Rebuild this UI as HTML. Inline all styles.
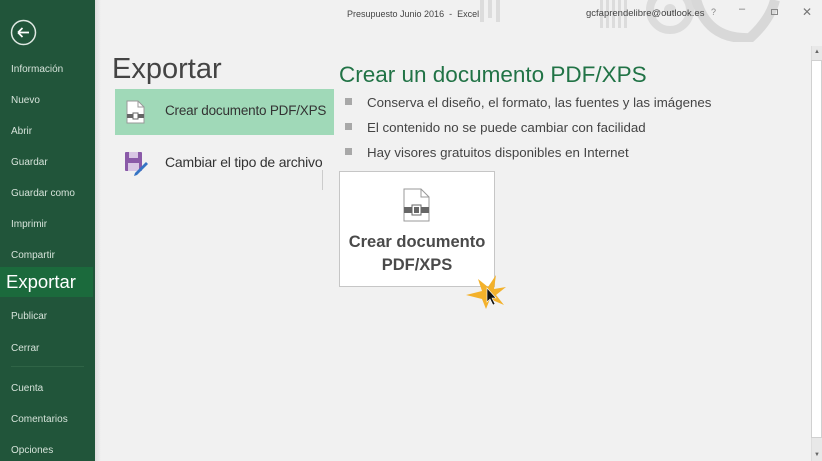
<!DOCTYPE html>
<html><head><meta charset="utf-8"><style>
*{margin:0;padding:0;box-sizing:border-box}
body{width:822px;height:461px;overflow:hidden;background:#f1f1f1;font-family:"Liberation Sans",sans-serif;position:relative}
.sb{position:absolute;left:0;top:0;width:95px;height:461px;background:#21553a}
.sb div{position:absolute;left:11px;color:#d6e3da;font-size:10px}
.sel{position:absolute;left:0;top:267px;width:93px;height:30px;background:#1b6a3c}
.sel span{position:absolute;left:6px;top:4px;color:#fff;font-size:18.5px}
.t{position:absolute;color:#444;white-space:nowrap}
.sq{position:absolute;left:345px;width:7px;height:7px;background:#a8a8a8}
</style></head><body>
<div style="position:absolute;left:95px;top:0;width:6px;height:461px;background:linear-gradient(90deg,#ddd,#f1f1f1)"></div>
<svg style="position:absolute;left:470px;top:0" width="320" height="42">
<g fill="#dcdcdc"><rect x="10" y="0" width="4" height="22"/><rect x="18" y="0" width="4" height="18"/><rect x="26" y="0" width="4" height="22"/>
<rect x="130" y="0" width="3" height="28"/><rect x="136" y="0" width="3" height="28"/><rect x="142" y="0" width="3" height="28"/><rect x="148" y="0" width="3" height="28"/><rect x="154" y="0" width="3" height="28"/></g>
<circle cx="200" cy="10" r="20" fill="none" stroke="#dcdcdc" stroke-width="8"/>
<circle cx="200" cy="10" r="6" fill="#dcdcdc"/>
<path d="M225 -5 Q235 40 280 38 Q300 20 305 0" fill="none" stroke="#d8d8d8" stroke-width="10"/>
</svg>
<div class="t" style="left:347px;top:9px;font-size:9px;color:#444">Presupuesto Junio 2016 &nbsp;-&nbsp; Excel</div>
<div class="t" style="left:586px;top:8px;font-size:9.5px;color:#444">gcfaprendelibre@outlook.es</div>
<div class="t" style="left:711px;top:7px;font-size:9px;color:#888">?</div>
<div class="t" style="left:739px;top:3px;font-size:11px;color:#777">–</div>
<div style="position:absolute;left:771px;top:9px;width:7px;height:6px;border:1px solid #888"></div>
<div class="t" style="left:802px;top:5px;font-size:12px;color:#777">✕</div>
<div style="position:absolute;left:811px;top:46px;width:11px;height:415px;background:#e8e8e8;border-left:1px solid #ddd"></div>
<div class="t" style="left:814px;top:49px;font-size:6px;color:#666">▲</div>
<div class="t" style="left:814px;top:452px;font-size:6px;color:#666">▼</div>
<div style="position:absolute;left:811px;top:60px;width:11px;height:378px;background:#fff;border:1px solid #d0d0d0"></div>

<div class="sb">
<svg style="position:absolute;left:10px;top:19px" width="27" height="27"><circle cx="13.5" cy="13.5" r="12" fill="none" stroke="#dfe8e2" stroke-width="1.5"/><path d="M8 13.5H19M8 13.5L12.5 9M8 13.5L12.5 18" stroke="#fff" stroke-width="1.7" fill="none"/></svg>
<div style="top:64px">Información</div>
<div style="top:95px">Nuevo</div>
<div style="top:126px">Abrir</div>
<div style="top:157px">Guardar</div>
<div style="top:188px">Guardar como</div>
<div style="top:219px">Imprimir</div>
<div style="top:250px">Compartir</div>
<div style="top:311px">Publicar</div>
<div style="top:343px">Cerrar</div>
<div style="top:366px;left:11px;width:73px;height:1px;background:#2f6446"></div>
<div style="top:383px">Cuenta</div>
<div style="top:414px">Comentarios</div>
<div style="top:445px">Opciones</div>
</div>
<div class="sel"><span>Exportar</span></div>

<div class="t" style="left:112px;top:53px;font-size:29px;color:#444">Exportar</div>
<div style="position:absolute;left:115px;top:89px;width:219px;height:46px;background:#a0d9b8"></div>
<svg style="position:absolute;left:126px;top:100px" width="20" height="24"><path d="M1 1H12L18 7V23H1Z" fill="#fff" stroke="#999"/><path d="M12 1V7H18" fill="none" stroke="#999"/><rect x="1" y="14" width="17" height="4" fill="#666"/><rect x="7" y="13" width="5" height="6" fill="#fff" stroke="#666"/></svg>
<div class="t" style="left:165px;top:103px;font-size:13.5px;color:#333;letter-spacing:-0.2px">Crear documento PDF/XPS</div>
<svg style="position:absolute;left:125px;top:152px" width="24" height="24"><rect x="0" y="0" width="17" height="19" rx="1" fill="#8a5aa8"/><rect x="4" y="0" width="9" height="6" fill="#d8c6e4"/><rect x="3" y="11" width="11" height="8" fill="#d8c6e4"/><path d="M10 21L21 10L23 12L12 23L9 24Z" fill="#3574c4"/></svg>
<div class="t" style="left:165px;top:154px;font-size:14px;color:#333;letter-spacing:-0.2px">Cambiar el tipo de archivo</div>
<div style="position:absolute;left:322px;top:170px;width:1px;height:20px;background:#ccc"></div>

<div class="t" style="left:339px;top:62px;font-size:22.5px;color:#217346">Crear un documento PDF/XPS</div>
<div class="sq" style="top:98px"></div><div class="t" style="left:367px;top:95px;font-size:13.3px">Conserva el diseño, el formato, las fuentes y las imágenes</div>
<div class="sq" style="top:123px"></div><div class="t" style="left:367px;top:120px;font-size:13.3px">El contenido no se puede cambiar con facilidad</div>
<div class="sq" style="top:148px"></div><div class="t" style="left:367px;top:145px;font-size:13.3px">Hay visores gratuitos disponibles en Internet</div>

<div style="position:absolute;left:339px;top:171px;width:156px;height:116px;background:#fff;border:1px solid #c6c6c6"></div>
<svg style="position:absolute;left:403px;top:188px" width="28" height="34"><path d="M1 1H18L26 9V33H1Z" fill="#fff" stroke="#999"/><path d="M18 1V9H26" fill="none" stroke="#999"/><rect x="1" y="19" width="25" height="6" fill="#666"/><rect x="9" y="17" width="9" height="10" fill="#fff" stroke="#666"/><rect x="11" y="19" width="5" height="6" fill="#666"/></svg>
<div class="t" style="left:339px;top:231px;width:156px;text-align:center;font-size:16.5px;font-weight:bold;line-height:23px;color:#4a4a4a">Crear documento<br>PDF/XPS</div>
<svg style="position:absolute;left:464px;top:273px" width="44" height="36"><path d="M2 22L18 18L14 6L24 14L32 2L30 16L42 14L32 22L40 32L26 26L22 36L18 26Z" fill="#f3b12b"/><path d="M23 15V29L26 26L29 32L31 31L28 25L32 25Z" fill="#111" stroke="#fff" stroke-width="0.6"/></svg>
</body></html>
